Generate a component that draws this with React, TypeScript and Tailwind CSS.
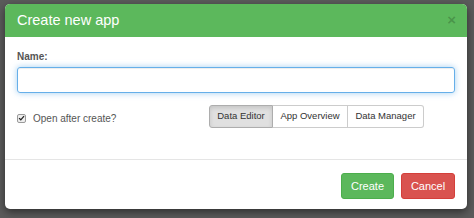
import React from "react";

const font = { fontFamily: '"Liberation Sans", Arial, sans-serif' };

export default function App() {
  return (
    <div
      className="w-[474px] h-[218px] bg-[#5b5b5b] pt-[4px] pl-[5px] overflow-hidden"
      style={font}
    >
      {/* Modal */}
      <div className="w-[462px] h-[205px] bg-white rounded-[5px] overflow-hidden shadow-[0_3px_9px_rgba(0,0,0,0.5)] flex flex-col">
        {/* Header */}
        <div className="h-[33px] bg-[#5cb85c] flex items-center justify-between pl-3 pr-[11px]">
          <h4 className="text-[14.5px] text-white leading-none">Create new app</h4>
          <span className="text-[15px] font-bold leading-none text-black/20 -mt-[2px]">×</span>
        </div>

        {/* Body */}
        <div className="px-3 pt-[13px] pb-[31px] border-b border-[#e5e5e5]">
          <label className="block text-[10px] font-bold text-[#555] leading-[14px] mb-[3px]">
            Name:
          </label>
          <input
            type="text"
            className="block w-full h-[26px] rounded-[3px] border border-[#66afe9] outline-none px-2 text-[11px] shadow-[inset_0_1px_1px_rgba(0,0,0,0.075),0_0_6px_rgba(102,175,233,0.6)]"
          />
          <div className="mt-[12px] flex items-center justify-between pr-[31px]">
            <label className="flex items-center gap-[7px] text-[10px] text-[#555] pt-[3px]">
              <span className="w-[9px] h-[9px] rounded-[2px] border border-[#9a9a9a] bg-[#eee] flex items-center justify-center">
                <svg viewBox="0 0 10 10" className="w-[8px] h-[8px]">
                  <path d="M1.5 5.2 L4 7.6 L8.6 2.2" fill="none" stroke="#222" strokeWidth="1.8" />
                </svg>
              </span>
              Open after create?
            </label>
            <div className="flex h-[23px] text-[9.5px] text-[#333]">
              <button className="w-[64px] bg-[#e0e0e0] border border-[#adadad] rounded-l-[3px] shadow-[inset_0_2px_4px_rgba(0,0,0,0.125)]">
                Data Editor
              </button>
              <button className="w-[75px] bg-white border border-l-0 border-[#ccc]">
                App Overview
              </button>
              <button className="w-[76px] bg-white border border-l-0 border-[#ccc] rounded-r-[3px]">
                Data Manager
              </button>
            </div>
          </div>
        </div>

        {/* Footer */}
        <div className="flex justify-end gap-[7px] pt-[13px] pr-3">
          <button className="w-[53px] h-[26px] rounded-[3px] bg-[#5cb85c] border border-[#4cae4c] text-white text-[11px]">
            Create
          </button>
          <button className="w-[54px] h-[26px] rounded-[3px] bg-[#d9534f] border border-[#d43f3a] text-white text-[11px]">
            Cancel
          </button>
        </div>
      </div>
    </div>
  );
}
